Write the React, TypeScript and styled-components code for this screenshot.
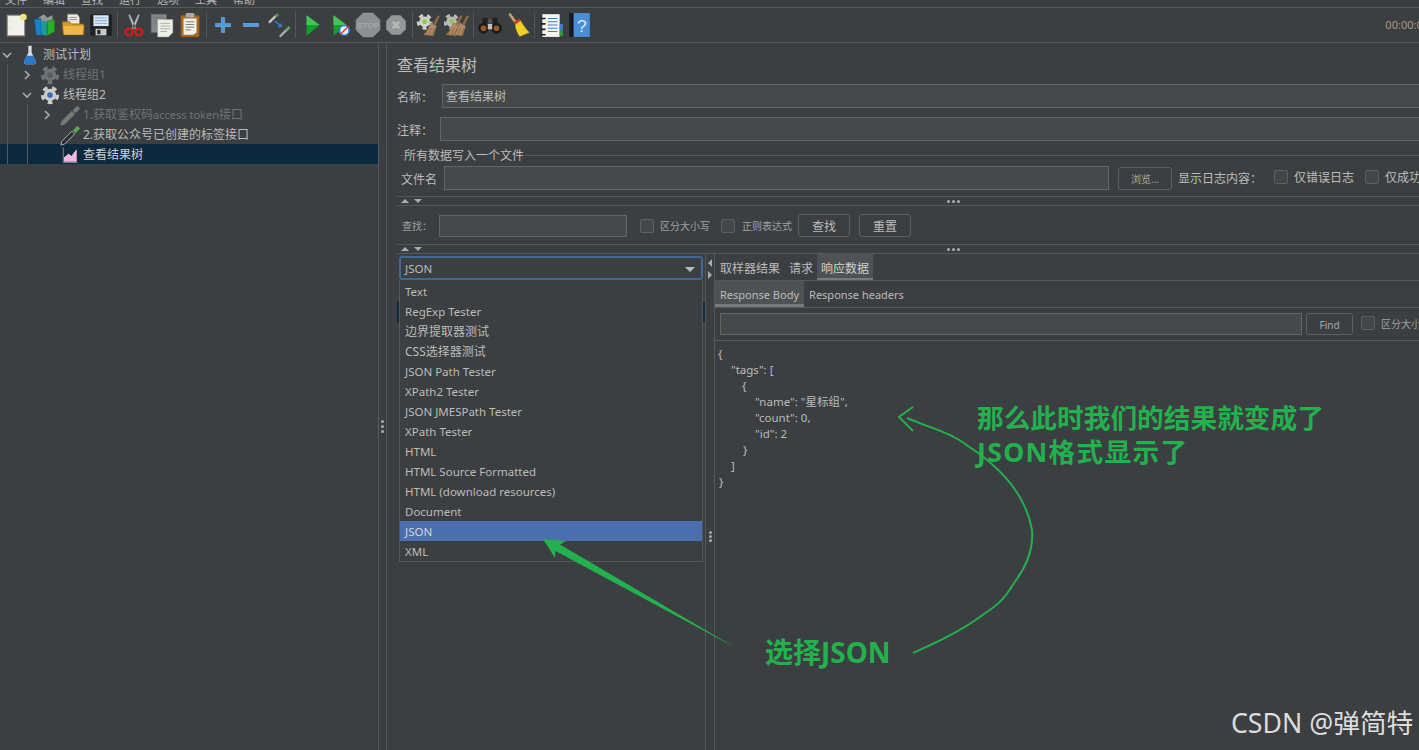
import React, { ReactElement, ReactNode } from 'react';
import styled, { createGlobalStyle } from 'styled-components';

const FONT = '"Noto Sans", "Noto Sans CJK SC", sans-serif';
const BORDER = '#555758';
const GREEN = '#22b14c';

const GlobalStyle = createGlobalStyle`
  html, body {
    margin: 0;
    height: 100%;
    overflow: hidden;
    background: #3c3f41;
  }
  #root {
    height: 100%;
  }
  * {
    box-sizing: border-box;
  }
`;

const Page = styled.div`
  position: relative;
  width: 1419px;
  height: 750px;
  overflow: hidden;
  display: flex;
  flex-direction: column;
  background: #3c3f41;
  color: #bbbbbb;
  font: 12px/16px ${FONT};
`;

const MenuBar = styled.div`
  flex: none;
  height: 8px;
  display: flex;
  align-items: flex-end;
  padding-left: 5px;
  overflow: hidden;
  border-bottom: 1px solid ${BORDER};
`;

const MenuItem = styled.span`
  flex: none;
  width: 38px;
  font-size: 11px;
  line-height: 14px;
  color: #b5b5b5;
`;

const Toolbar = styled.div`
  flex: none;
  height: 35px;
  display: flex;
  align-items: center;
  padding-left: 3px;
  border-bottom: 1px solid ${BORDER};
`;

const ToolButton = styled.div`
  flex: none;
  width: 28px;
  height: 28px;
  display: flex;
  align-items: center;
  justify-content: center;
`;

const ToolSeparator = styled.div`
  flex: none;
  width: 1px;
  height: 26px;
  margin: 0 2px;
  background: ${BORDER};
`;

const Timer = styled.span`
  margin-left: auto;
  margin-right: -10px;
  font-size: 11px;
  color: #a39a80;
`;

const Main = styled.div`
  flex: 1;
  min-height: 0;
  display: flex;
`;

const TreePane = styled.div`
  flex: none;
  width: 379px;
  padding-top: 1px;
  border-right: 1px solid ${BORDER};
`;

const TreeRow = styled.div<{ $pad: number; $guides?: number; $selected?: boolean; $muted?: boolean }>`
  height: 20px;
  display: flex;
  align-items: center;
  padding-top: 2px;
  padding-left: ${(p) => p.$pad}px;
  white-space: pre;
  color: ${(p) => (p.$muted ? '#6f7173' : p.$selected ? '#d0d0d0' : '#bbbbbb')};
  background-color: ${(p) => (p.$selected ? '#0d293e' : 'transparent')};
  background-image: ${(p) =>
    p.$guides
      ? `linear-gradient(${BORDER}, ${BORDER})${p.$guides > 1 ? `, linear-gradient(${BORDER}, ${BORDER})` : ''}`
      : 'none'};
  background-size: 1px 100%;
  background-repeat: no-repeat;
  background-position: 7px 0, 27px 0;
`;

const LatinRun = styled.span`
  font-size: 11px;
`;

const Chevron = styled.svg`
  flex: none;
  width: 10px;
  height: 10px;
  margin-right: 7px;
`;

const ChevronSlot = styled.span`
  flex: none;
  width: 17px;
`;

const NodeIcon = styled.span`
  flex: none;
  width: 22px;
  height: 20px;
  margin-right: 2px;
  display: flex;
  align-items: center;
  justify-content: center;
`;

const SplitBar = styled.div`
  flex: none;
  width: 7px;
  display: flex;
  flex-direction: column;
  align-items: center;
  padding-top: 377px;
  gap: 2px;
`;

const Dot = styled.i`
  display: block;
  width: 3px;
  height: 3px;
  border-radius: 50%;
  background: #a9abad;
`;

const Detail = styled.div`
  flex: none;
  width: 1060px;
  display: flex;
  flex-direction: column;
  padding-left: 10px;
  border-left: 1px solid ${BORDER};
`;

const Title = styled.div`
  flex: none;
  height: 41px;
  padding-top: 5px;
  font-size: 16px;
  line-height: 34px;
`;

const FormRow = styled.div<{ $labelWidth: number; $indent?: number; $gap?: number }>`
  flex: none;
  height: 24px;
  display: flex;
  align-items: center;
  padding-left: ${(p) => p.$indent ?? 0}px;
  margin-bottom: ${(p) => p.$gap ?? 0}px;

  > label {
    flex: none;
    width: ${(p) => p.$labelWidth}px;
    padding-top: 3px;
  }
`;

const TextField = styled.div`
  flex: 1;
  min-width: 0;
  height: 24px;
  padding: 2px 0 0 3px;
  line-height: 20px;
  background: #45494a;
  border: 1px solid #646464;
  color: #bbbbbb;
`;

const FileField = styled(TextField)`
  flex: none;
  width: 665px;
`;

const Legend = styled.div`
  flex: none;
  height: 18px;
  margin: 5px 0 2px 2px;
  display: flex;
  align-items: center;
  gap: 1px;

  &::before {
    content: '';
    width: 4px;
    height: 1px;
    background: ${BORDER};
  }

  &::after {
    content: '';
    flex: 1;
    height: 1px;
    background: ${BORDER};
  }
`;

const LegendText = styled.span`
  padding-top: 2px;
`;

const Button = styled.div<{ $width: number; $small?: boolean }>`
  flex: none;
  width: ${(p) => p.$width}px;
  height: 23px;
  display: flex;
  align-items: center;
  justify-content: center;
  padding-top: 2px;
  font-size: ${(p) => (p.$small ? 10 : 12)}px;
  color: ${(p) => (p.$small ? '#a8a8a8' : '#bbbbbb')};
  border: 1px solid #5e6060;
  border-radius: 3px;
`;

const BrowseButton = styled(Button)`
  margin: 0 6px 0 9px;
`;

const ResetButton = styled(Button)`
  margin-left: 9px;
`;

const FindButton = styled(Button)`
  height: 22px;
`;

const LogCaption = styled.span`
  flex: none;
  width: 79px;
  padding-top: 2px;
  white-space: nowrap;
`;

const CheckBox = styled.span`
  flex: none;
  width: 14px;
  height: 14px;
  border: 1px solid #5e6060;
  border-radius: 2px;
  background: #43474a;
`;

const LogCheck = styled(CheckBox)<{ $first?: boolean }>`
  margin-left: ${(p) => (p.$first ? 17 : 0)}px;
  margin-top: -2px;
`;

const CheckLabel = styled.span<{ $small?: boolean; $before: number; $after: number }>`
  flex: none;
  margin-left: ${(p) => p.$before}px;
  margin-right: ${(p) => p.$after}px;
  font-size: ${(p) => (p.$small ? 10 : 12)}px;
  color: ${(p) => (p.$small ? '#a0a0a0' : '#bbbbbb')};
`;

const LogLabel = styled.span`
  flex: none;
  width: 71px;
  margin-left: 6px;
  white-space: nowrap;
`;

const Splitter = styled.div<{ $top: number }>`
  flex: none;
  height: 10px;
  margin-top: ${(p) => p.$top}px;
  display: flex;
  align-items: center;
  padding-left: 4px;
  border-top: 1px solid ${BORDER};
  border-bottom: 1px solid ${BORDER};
`;

const SplitArrow = styled.i<{ $down?: boolean }>`
  flex: none;
  width: 0;
  height: 0;
  margin-right: 5px;
  border-left: 4px solid transparent;
  border-right: 4px solid transparent;
  ${(p) => (p.$down ? 'border-top: 4px solid #a9abad;' : 'border-bottom: 4px solid #a9abad;')}
`;

const SplitDots = styled.span`
  display: flex;
  gap: 2px;
  margin-left: 520px;
`;

const FindRow = styled.div`
  flex: none;
  height: 23px;
  margin-top: 8px;
  display: flex;
  align-items: center;
  padding-left: 5px;
`;

const FindLabel = styled.span`
  flex: none;
  width: 37px;
  font-size: 10px;
  color: #a0a0a0;
`;

const FindInput = styled(TextField)`
  flex: none;
  width: 188px;
  height: 22px;
  margin-right: 13px;
`;

const Bottom = styled.div`
  flex: 1;
  min-height: 0;
  display: flex;
`;

const ResultPane = styled.div`
  position: relative;
  flex: none;
  width: 308px;
  padding-top: 2px;
`;

const ComboBox = styled.div`
  height: 24px;
  margin: 0 2px;
  display: flex;
  align-items: center;
  justify-content: space-between;
  padding: 2px 6px 0 4px;
  font-size: 11.5px;
  background: #3c3f41;
  border: 2px solid #3e6a94;
  border-radius: 3px;
`;

const ComboArrow = styled.i`
  width: 0;
  height: 0;
  border-left: 5px solid transparent;
  border-right: 5px solid transparent;
  border-top: 5px solid #bbbbbb;
`;

const ResultSelected = styled.div`
  height: 20px;
  margin-top: 22px;
  background: #0d293e;
`;

// the open list of the combo box, over the result list
const ComboList = styled.div`
  position: absolute;
  top: 26px;
  left: 2px;
  width: 304px;
  height: 282px;
  padding: 1px 0 0;
  background: #3c3f41;
  border: 1px solid ${BORDER};
  border-top: none;
`;

const ComboItem = styled.div<{ $selected?: boolean; $latin?: boolean }>`
  height: 20px;
  padding-left: 5px;
  font-size: ${(p) => (p.$latin ? 11.5 : 12)}px;
  line-height: 22px;
  background: ${(p) => (p.$selected ? '#4b6eaf' : 'transparent')};
  color: ${(p) => (p.$selected ? '#d6d6d6' : '#bbbbbb')};
`;

const VerticalSplit = styled.div`
  flex: none;
  width: 10px;
  display: flex;
  flex-direction: column;
  align-items: center;
  padding-top: 5px;
  border-left: 1px solid ${BORDER};
  border-right: 1px solid ${BORDER};
`;

const SideArrow = styled.i<{ $right?: boolean }>`
  flex: none;
  width: 0;
  height: 0;
  margin-bottom: 4px;
  border-top: 4px solid transparent;
  border-bottom: 4px solid transparent;
  ${(p) => (p.$right ? 'border-left: 4px solid #a9abad;' : 'border-right: 4px solid #a9abad;')}
`;

const SideDots = styled.div`
  display: flex;
  flex-direction: column;
  gap: 1px;
  margin-top: 248px;
`;

const ResponsePane = styled.div`
  flex: 1;
  min-width: 0;
  display: flex;
  flex-direction: column;
`;

const TabStrip = styled.div`
  flex: none;
  height: 27px;
  display: flex;
  padding-left: 1px;
  border-bottom: 1px solid ${BORDER};

  > *:first-child {
    margin-right: 1px;
  }
`;

const Tab = styled.div<{ $active?: boolean }>`
  height: 26px;
  padding: 0 4px;
  line-height: 29px;
  background: ${(p) => (p.$active ? '#4e5254' : 'transparent')};
  color: ${(p) => (p.$active ? '#cfcfcf' : '#bbbbbb')};
  box-shadow: ${(p) => (p.$active ? 'inset 0 -2px 0 #747a80' : 'none')};
`;

const SubTabStrip = styled.div`
  flex: none;
  height: 27px;
  display: flex;
  border-bottom: 1px solid ${BORDER};
`;

const SubTab = styled.div<{ $active?: boolean }>`
  height: 26px;
  padding: 0 5px;
  font-size: 11px;
  line-height: 28px;
  background: ${(p) => (p.$active ? '#4e5254' : 'transparent')};
  box-shadow: ${(p) => (p.$active ? 'inset 0 -3px 0 #747a80' : 'none')};
`;

const SearchRow = styled.div`
  flex: none;
  height: 33px;
  display: flex;
  align-items: flex-start;
  padding: 5px 0 0 5px;
  border-bottom: 1px solid ${BORDER};
`;

const SearchInput = styled(TextField)`
  flex: none;
  width: 582px;
  height: 22px;
  margin-right: 4px;
`;

const SearchCheck = styled(CheckBox)`
  margin: 3px 6px 0 8px;
`;

const SearchCheckLabel = styled.span`
  flex: none;
  margin-top: 3px;
  font-size: 10px;
  color: #a0a0a0;
`;

const JsonView = styled.div`
  flex: 1;
  padding: 5px 0 0 3px;
`;

const JsonLine = styled.div<{ $indent: number }>`
  height: 16px;
  padding-left: ${(p) => p.$indent}px;
  font-size: 11.5px;
  white-space: pre;
`;

const Annotations = styled.svg`
  position: absolute;
  inset: 0;
  pointer-events: none;
`;

const AnnotationText = styled.div<{ $left: number; $top: number; $size?: number; $spacing?: number }>`
  position: absolute;
  left: ${(p) => p.$left}px;
  top: ${(p) => p.$top}px;
  font-size: ${(p) => p.$size ?? 26.7}px;
  letter-spacing: ${(p) => p.$spacing ?? 0}px;
  font-weight: 700;
  line-height: 34px;
  white-space: nowrap;
  color: ${GREEN};
`;

const Watermark = styled.div`
  position: absolute;
  left: 1231px;
  top: 705px;
  font-size: 26.7px;
  line-height: 36px;
  white-space: nowrap;
  color: #dcdcdc;
`;

const Ico = ({ children, size = 26 }: { children: ReactNode; size?: number }): ReactElement => (
  <svg width={size} height={size} viewBox="0 0 24 24">
    {children}
  </svg>
);

const GearShape = ({ x, y, r, fill, center }: { x: number; y: number; r: number; fill: string; center: string }) => (
  <>
    <circle cx={x} cy={y} r={r} fill="none" stroke={fill} strokeWidth={r * 0.45} strokeDasharray={`${r * 0.62} ${r * 0.62}`} />
    <circle cx={x} cy={y} r={r * 0.82} fill={fill} />
    <circle cx={x} cy={y} r={r * 0.38} fill={center} />
  </>
);

const BroomShape = ({ dx = 0 }: { dx?: number }) => (
  <g transform={`translate(${dx} 0)`}>
    <path d="M20 3l2 1-4 8-2-1z" fill="#8a6a48" />
    <path d="M14 10l5 3-3 9-9-1c3-3 5-7 7-11z" fill="#b08a62" stroke="#7d6044" strokeWidth=".5" />
    <path d="M11 16l-2 5M14 15l-2 6M17 15l-2 6" stroke="#7d6044" strokeWidth=".7" />
  </g>
);

const toolIcons: ReactElement[][] = [
  [
    <Ico key="new">
      <rect x="3" y="3" width="16" height="19" fill="#f1f1ea" stroke="#8d8d88" />
      <circle cx="18" cy="4.5" r="3" fill="#f2e27a" />
      <path d="M5 8v.5M5 14v.5" stroke="#999" />
    </Ico>,
    <Ico key="templates">
      <path d="M6 5l5-3 3 3 5-2v8H6z" fill="#8f9695" />
      <path d="M2 7l6-1 1 15-5 1z" fill="#1f7fc4" stroke="#0f4d80" strokeWidth=".6" />
      <path d="M8 8l6 1v13l-5-1z" fill="#1c9c9a" />
      <path d="M14 9l7-2v11l-7 4z" fill="#2eae28" stroke="#186e16" strokeWidth=".6" />
    </Ico>,
    <Ico key="open">
      <path d="M7 2h9l2 3v7H7z" fill="#eceae2" stroke="#8a8a80" strokeWidth=".6" />
      <path d="M8.5 5h7M8.5 7h7" stroke="#777" strokeWidth=".7" />
      <path d="M2 9h7l1 2h12v10H3z" fill="#d79a26" stroke="#8c5f10" strokeWidth=".7" />
      <path d="M3 13h19l-1 8H4z" fill="#eeb849" />
    </Ico>,
    <Ico key="save">
      <rect x="2" y="2" width="20" height="20" rx="1.5" fill="#1f2022" />
      <rect x="5" y="3" width="14" height="10" fill="#dbe7f4" />
      <path d="M6.5 5.5h11M6.5 8h11M6.5 10.5h11" stroke="#7aa3cf" strokeWidth=".8" />
      <rect x="7" y="15.5" width="10" height="6" fill="#c9c9c9" />
      <rect x="8.5" y="16.5" width="3" height="4" fill="#26282a" />
    </Ico>,
  ],
  [
    <Ico key="cut">
      <path d="M8 2l6 13-2 1L7 3zM16 2l-6 13 2 1 5-13z" fill="#c8cacb" stroke="#77797a" strokeWidth=".5" />
      <circle cx="7.5" cy="18.5" r="3.2" fill="none" stroke="#d41b1b" strokeWidth="2" />
      <circle cx="16.5" cy="18.5" r="3.2" fill="none" stroke="#d41b1b" strokeWidth="2" />
    </Ico>,
    <Ico key="copy">
      <rect x="2" y="2" width="14" height="17" fill="#85888a" stroke="#66696b" strokeWidth=".6" />
      <path d="M4 5h10M4 8h10M4 11h10" stroke="#6d7072" strokeWidth=".7" />
      <path d="M8 7h14v12l-4 4H8z" fill="#efefe9" stroke="#a5a5a0" strokeWidth=".5" />
      <path d="M10.5 10.5h9M10.5 13h9M10.5 15.5h9M10.5 18h6" stroke="#9a9a95" strokeWidth=".7" />
    </Ico>,
    <Ico key="paste">
      <rect x="3.5" y="3" width="17" height="20" rx="1" fill="#a96a23" stroke="#7a4a12" strokeWidth=".5" />
      <rect x="8" y="1" width="8" height="4" rx="1" fill="#a7a9aa" />
      <path d="M6 6h12v13l-3 2H6z" fill="#f2f2ec" />
      <path d="M8 9h8M8 11.5h8M8 14h8M8 16.5h5" stroke="#6f6f6a" strokeWidth=".8" />
    </Ico>,
  ],
  [
    <Ico key="add">
      <path d="M10.5 5h3v5.5H19v3h-5.5V19h-3v-5.5H5v-3h5.5z" fill="#4f9bdf" stroke="#9cc7ee" strokeWidth=".4" />
    </Ico>,
    <Ico key="remove">
      <rect x="5" y="10.5" width="14" height="3" fill="#4f9bdf" stroke="#9cc7ee" strokeWidth=".4" />
    </Ico>,
    <Ico key="toggle">
      <path d="M2 9l6-6 1.5 1.5-6 6z" fill="#c3c5c6" />
      <path d="M8 3l2.5-2 1.5 2-2.5 2z" fill="#4c9a50" />
      <path d="M12 22l6-6 1.5 1.5-6 6z" fill="#a8aaab" />
      <path d="M18 16l3-3 1.5 2-3 3z" fill="#6aa56c" />
      <path d="M8 8l6 5.5M14 13.5v-3M14 13.5h-3" stroke="#2f80d8" strokeWidth="1.3" fill="none" />
    </Ico>,
  ],
  [
    <Ico key="start">
      <path d="M7 3l12 9-12 10z" fill="#13a02a" />
      <path d="M7 3l12 9H7z" fill="#46c45a" />
    </Ico>,
    <Ico key="startnt">
      <path d="M6 3l12 9-12 10z" fill="#13a02a" />
      <path d="M6 3l12 9H6z" fill="#46c45a" />
      <circle cx="16" cy="17" r="4.5" fill="#e9f1fa" stroke="#2c78cf" strokeWidth="1.5" />
      <path d="M12 21l8-8" stroke="#d83a3a" strokeWidth="1.2" />
    </Ico>,
    <Ico key="stop" size={26}>
      <path d="M7.5 1h9L23 7.5v9L16.5 23h-9L1 16.5v-9z" fill="#8d8f90" stroke="#a2a4a5" strokeWidth=".5" />
      <text x="12" y="15" textAnchor="middle" fontSize="7.5" fontWeight="700" fontFamily="Liberation Sans, sans-serif" fill="#a6a8a9">
        STOP
      </text>
    </Ico>,
    <Ico key="shutdown">
      <path d="M8 3h8l5 5v8l-5 5H8l-5-5V8z" fill="#949697" />
      <path d="M9 9l6 6M15 9l-6 6" stroke="#b6b8b9" strokeWidth="2.5" />
    </Ico>,
  ],
  [
    <Ico key="clear">
      <GearShape x={8} y={9} r={6} fill="#d2d3cf" center="#8ccb3c" />
      <BroomShape />
    </Ico>,
    <Ico key="clearall">
      <GearShape x={7} y={9} r={6} fill="#b9bab6" center="#9cc060" />
      <BroomShape dx={-5} />
      <BroomShape dx={1} />
    </Ico>,
  ],
  [
    <Ico key="find">
      <rect x="5" y="5" width="5" height="6" rx="1.5" fill="#222" />
      <rect x="14" y="5" width="5" height="6" rx="1.5" fill="#222" />
      <rect x="10" y="7" width="4" height="3" fill="#555" />
      <circle cx="6" cy="15" r="5" fill="#1c1c1c" />
      <circle cx="18" cy="15" r="5" fill="#1c1c1c" />
      <circle cx="6" cy="15" r="2.6" fill="#9a5a20" />
      <circle cx="18" cy="15" r="2.6" fill="#9a5a20" />
      <rect x="10" y="11" width="4" height="5" fill="#c0c0c0" />
    </Ico>,
    <Ico key="broom">
      <path d="M3 2l2-1 6 8-2 1.5z" fill="#c8a06a" />
      <path d="M8 9.5l5-3.5 1.5 2-5 3.5z" fill="#d43030" />
      <path d="M9.5 11.5l5-3.5c2 4 5 8 8 11l-9 3.5c-2-3-4-7-4-11z" fill="#f0d02a" stroke="#b99a10" strokeWidth=".5" />
    </Ico>,
  ],
  [
    <Ico key="tree">
      <rect x="4" y="2" width="16" height="21" fill="#f4f4f0" />
      <rect x="20" y="11" width="3" height="6" fill="#3a7fd0" />
      <rect x="20" y="17" width="3" height="5" fill="#2f9a3a" />
      <path d="M9 6h9M9 9h9M9 12h9M9 15h9M9 18h9" stroke="#3a7fd0" strokeWidth="1" />
      <path d="M2 6h5M2 11h5M2 16h5M2 21h5" stroke="#222" strokeWidth="1.5" />
    </Ico>,
    <Ico key="help">
      <rect x="3" y="1" width="5" height="22" fill="#15181c" />
      <rect x="7" y="1" width="15" height="22" fill="#4a8ed8" />
      <text x="14.5" y="18" textAnchor="middle" fontSize="16" fontFamily="Liberation Sans, sans-serif" fill="#dce9f7">
        ?
      </text>
    </Ico>,
  ],
];

const FlaskIcon = () => (
  <Ico size={20}>
    <path d="M10 1h4v8l5 11a2 2 0 0 1-2 3H7a2 2 0 0 1-2-3l5-11z" fill="#d9dcdf" />
    <path d="M8 13h8l3 7a2 2 0 0 1-2 3H7a2 2 0 0 1-2-3z" fill="#2c77cf" />
  </Ico>
);

const GroupIcon = ({ on }: { on?: boolean }) => (
  <Ico size={20}>
    <GearShape x={12} y={12} r={9} fill={on ? '#c9cbcc' : '#717374'} center={on ? '#3a6fb8' : '#5a5c5d'} />
  </Ico>
);

const PipetteIcon = ({ on }: { on?: boolean }) => (
  <Ico size={22}>
    <path d="M2 23l1-4 11-11 3 3L6 22z" fill={on ? '#2a2c2e' : '#77797a'} stroke={on ? '#c5c7c8' : '#77797a'} strokeWidth=".9" />
    <path d="M15 7l5-5 3 3-5 5z" fill={on ? '#5ba84e' : '#77797a'} />
  </Ico>
);

const GraphIcon = () => (
  <Ico size={18}>
    <path d="M3 2v20M3 22h19" stroke="#9ba0a6" strokeWidth="1" fill="none" />
    <path d="M4 21v-5l6-5 4 3 7-9v16z" fill="#f4b6e2" />
    <path d="M4 16l6-5 4 3 7-9" stroke="#f5f5f5" strokeWidth="1" fill="none" />
  </Ico>
);

const Caret = ({ open }: { open?: boolean }) => (
  <Chevron viewBox="0 0 10 10">
    <path d={open ? 'M1 3l4 4 4-4' : 'M3 1l4 4-4 4'} fill="none" stroke="#a9abad" strokeWidth="1.6" />
  </Chevron>
);

const DotRow = () => (
  <>
    <Dot />
    <Dot />
    <Dot />
  </>
);

const MENU = ['文件', '编辑', '查找', '运行', '选项', '工具', '帮助'];

const COMBO_ITEMS = [
  'Text',
  'RegExp Tester',
  '边界提取器测试',
  'CSS选择器测试',
  'JSON Path Tester',
  'XPath2 Tester',
  'JSON JMESPath Tester',
  'XPath Tester',
  'HTML',
  'HTML Source Formatted',
  'HTML (download resources)',
  'Document',
  'JSON',
  'XML',
];

const JSON_LINES: [number, string][] = [
  [0, '{'],
  [13, '"tags": ['],
  [24, '{'],
  [37, '"name": "星标组",'],
  [37, '"count": 0,'],
  [37, '"id": 2'],
  [25, '}'],
  [13, ']'],
  [1, '}'],
];

const App = (): ReactElement => (
  <>
    <GlobalStyle />
    <Page>
      <MenuBar>
        {MENU.map((m) => (
          <MenuItem key={m}>{m}</MenuItem>
        ))}
      </MenuBar>
      <Toolbar>
        {toolIcons.map((group, i) => (
          <React.Fragment key={i}>
            {i > 0 && <ToolSeparator />}
            {group.map((icon) => (
              <ToolButton key={icon.key}>{icon}</ToolButton>
            ))}
          </React.Fragment>
        ))}
        <Timer>00:00:00</Timer>
      </Toolbar>
      <Main>
        <TreePane>
          <TreeRow $pad={2}>
            <Caret open />
            <NodeIcon>
              <FlaskIcon />
            </NodeIcon>
            测试计划
          </TreeRow>
          <TreeRow $pad={22} $guides={1} $muted>
            <Caret />
            <NodeIcon>
              <GroupIcon />
            </NodeIcon>
            线程组1
          </TreeRow>
          <TreeRow $pad={22} $guides={1}>
            <Caret open />
            <NodeIcon>
              <GroupIcon on />
            </NodeIcon>
            线程组2
          </TreeRow>
          <TreeRow $pad={42} $guides={2} $muted>
            <Caret />
            <NodeIcon>
              <PipetteIcon />
            </NodeIcon>
            <span>
              1.获取鉴权码<LatinRun>access token</LatinRun>接口
            </span>
          </TreeRow>
          <TreeRow $pad={42} $guides={2}>
            <ChevronSlot />
            <NodeIcon>
              <PipetteIcon on />
            </NodeIcon>
            2.获取公众号已创建的标签接口
          </TreeRow>
          <TreeRow $pad={42} $guides={2} $selected>
            <ChevronSlot />
            <NodeIcon>
              <GraphIcon />
            </NodeIcon>
            查看结果树
          </TreeRow>
        </TreePane>
        <SplitBar>
          <DotRow />
        </SplitBar>
        <Detail>
          <Title>查看结果树</Title>
          <FormRow $labelWidth={45} $gap={9}>
            <label>名称：</label>
            <TextField>查看结果树</TextField>
          </FormRow>
          <FormRow $labelWidth={43}>
            <label>注释：</label>
            <TextField />
          </FormRow>
          <Legend>
            <LegendText>所有数据写入一个文件</LegendText>
          </Legend>
          <FormRow $labelWidth={43} $indent={4}>
            <label>文件名</label>
            <FileField />
            <BrowseButton $width={54} $small>
              浏览...
            </BrowseButton>
            <LogCaption>显示日志内容：</LogCaption>
            <LogCheck $first />
            <LogLabel>仅错误日志</LogLabel>
            <LogCheck />
            <LogLabel>仅成功日志</LogLabel>
          </FormRow>
          <Splitter $top={6}>
            <SplitArrow />
            <SplitArrow $down />
            <SplitDots>
              <DotRow />
            </SplitDots>
          </Splitter>
          <FindRow>
            <FindLabel>查找：</FindLabel>
            <FindInput />
            <CheckBox />
            <CheckLabel $small $before={6} $after={11}>
              区分大小写
            </CheckLabel>
            <CheckBox />
            <CheckLabel $small $before={7} $after={6}>
              正则表达式
            </CheckLabel>
            <Button $width={52}>查找</Button>
            <ResetButton $width={52}>重置</ResetButton>
          </FindRow>
          <Splitter $top={7}>
            <SplitArrow />
            <SplitArrow $down />
            <SplitDots>
              <DotRow />
            </SplitDots>
          </Splitter>
          <Bottom>
            <ResultPane>
              <ComboBox>
                JSON
                <ComboArrow />
              </ComboBox>
              <ResultSelected />
              <ComboList>
                {COMBO_ITEMS.map((item) => (
                  <ComboItem key={item} $selected={item === 'JSON'} $latin={/^[ -~]+$/.test(item)}>
                    {item}
                  </ComboItem>
                ))}
              </ComboList>
            </ResultPane>
            <VerticalSplit>
              <SideArrow />
              <SideArrow $right />
              <SideDots>
                <DotRow />
              </SideDots>
            </VerticalSplit>
            <ResponsePane>
              <TabStrip>
                <Tab>取样器结果</Tab>
                <Tab>请求</Tab>
                <Tab $active>响应数据</Tab>
              </TabStrip>
              <SubTabStrip>
                <SubTab $active>Response Body</SubTab>
                <SubTab>Response headers</SubTab>
              </SubTabStrip>
              <SearchRow>
                <SearchInput />
                <FindButton $width={47} $small>
                  Find
                </FindButton>
                <SearchCheck />
                <SearchCheckLabel>区分大小写</SearchCheckLabel>
              </SearchRow>
              <JsonView>
                {JSON_LINES.map(([indent, text], i) => (
                  <JsonLine key={i} $indent={indent}>
                    {text}
                  </JsonLine>
                ))}
              </JsonView>
            </ResponsePane>
          </Bottom>
        </Detail>
      </Main>
      <Annotations width="1419" height="750" viewBox="0 0 1419 750">
        <path d="M543 539L566 541L560 544.5L736 648L555.5 551L555 558Z" fill={GREEN} />
        <path d="M913 407L899 417L913 431" fill="none" stroke={GREEN} strokeWidth="2" />
        <path
          d="M907 418C930 428 950 432 968 446C1000 467 1026 495 1032 530C1034 552 1024 570 1014 583C1004 600 996 606 984 614C960 632 935 643 913 653"
          fill="none"
          stroke={GREEN}
          strokeWidth="2"
        />
      </Annotations>
      <AnnotationText $left={977} $top={401}>
        那么此时我们的结果就变成了
      </AnnotationText>
      <AnnotationText $left={977} $top={435} $spacing={1.3}>
        JSON格式显示了
      </AnnotationText>
      <AnnotationText $left={765} $top={635} $size={28}>
        选择JSON
      </AnnotationText>
      <Watermark>CSDN @弹简特</Watermark>
    </Page>
  </>
);

export default App;
